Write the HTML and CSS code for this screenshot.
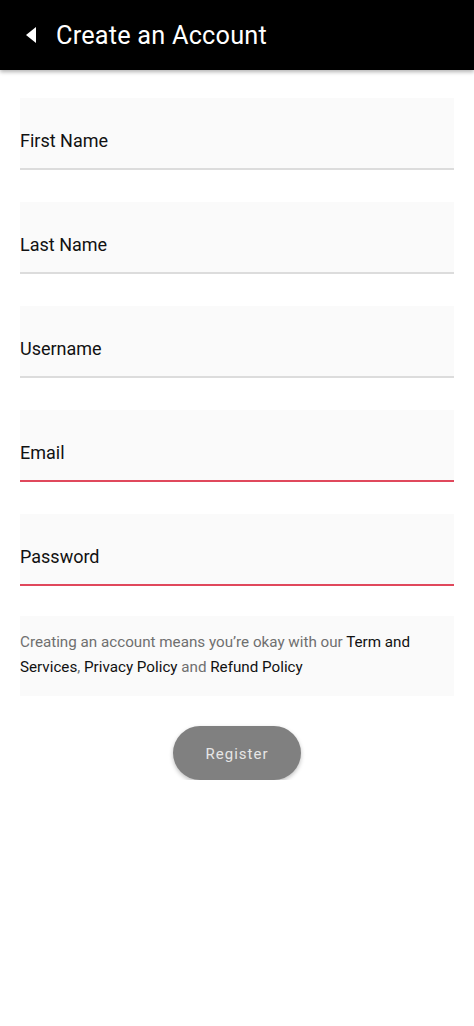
FILE: index.html
```html
<!DOCTYPE html>
<html>
<head>
<meta charset="utf-8">
<link rel="stylesheet" href="styles.css">
</head>
<body>
<header class="appbar">
  <svg class="back" width="12" height="16" viewBox="0 0 12 16"><path d="M11 0 L11 16 L1 8 Z" fill="#fff"/></svg>
  <h1 class="title">Create an Account</h1>
</header>
<main class="form">
  <div class="field"><span class="label">First Name</span></div>
  <div class="field"><span class="label">Last Name</span></div>
  <div class="field"><span class="label">Username</span></div>
  <div class="field error"><span class="label">Email</span></div>
  <div class="field error last"><span class="label">Password</span></div>
  <p class="terms">Creating an account means you’re okay with our <span class="link">Term and Services</span>, <span class="link">Privacy Policy</span> and <span class="link">Refund Policy</span></p>
  <div class="actions"><button class="register">Register</button></div>
</main>
</body>
</html>
```
FILE: styles.css
```css
* { box-sizing: border-box; }
body {
  margin: 0;
  font-family: Roboto, "Noto Sans", sans-serif;
  background: #fff;
  width: 474px;
}
.appbar {
  height: 70px;
  background: #000;
  display: flex;
  align-items: center;
  padding-left: 25px;
  box-shadow: 0 2px 4px rgba(0,0,0,0.3);
}
.back { display: block; margin-right: 19px; }
.title {
  margin: 1px 0 0 0;
  color: #fff;
  font-size: 25.3px;
  font-weight: 400;
  letter-spacing: 0.2px;
}
.form {
  padding: 28px 20px 0 20px;
  display: flex;
  flex-direction: column;
}
.field {
  height: 72px;
  background: #fafafa;
  border-bottom: 2px solid #dcdcdc;
  display: flex;
  align-items: flex-end;
  padding-bottom: 17px;
  margin-bottom: 32px;
}
.field.last { margin-bottom: 30px; }
.field.error { border-bottom-color: #e0485c; }
.label {
  font-size: 18px;
  color: #111;
}
.terms {
  margin: 0;
  background: #fafafa;
  height: 80px;
  padding-top: 14px;
  font-size: 15.2px;
  line-height: 25px;
  color: #6f6f6f;
  padding-right: 30px;
}
.link { color: #111; }
.actions {
  display: flex;
  justify-content: center;
  padding-top: 30px;
}
.register {
  width: 128px;
  height: 54px;
  padding-top: 2px;
  border: none;
  border-radius: 27px;
  background: #808080;
  color: #e6e6e6;
  font-family: Roboto, sans-serif;
  font-size: 15px;
  letter-spacing: 1px;
  box-shadow: 0 2px 4px rgba(0,0,0,0.25);
}
```
